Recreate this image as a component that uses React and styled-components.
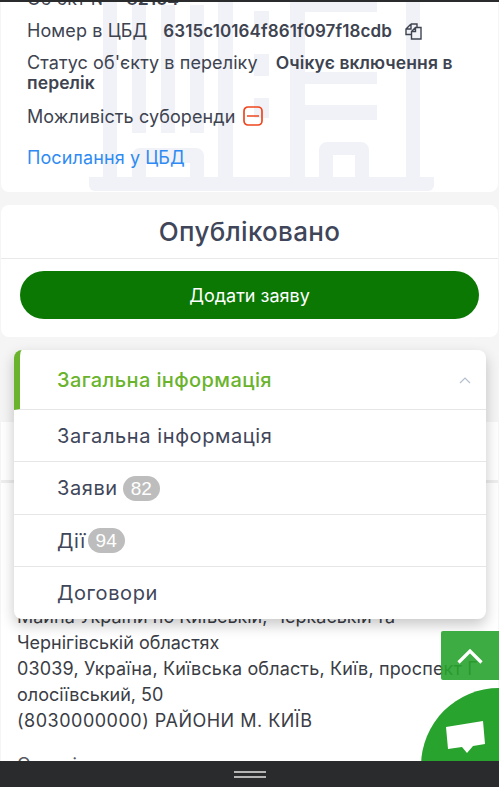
import React from 'react';
import styled, { createGlobalStyle } from 'styled-components';

const GlobalStyle = createGlobalStyle`
  * {
    box-sizing: border-box;
  }
  html, body {
    height: 100%;
    margin: 0;
    overflow: hidden;
  }
  body {
    background: #f5f5f5;
    color: #3e4350;
    font-family: Inter, "Noto Sans", sans-serif;
  }
`;

const Viewport = styled.div`
  height: 787px;
  overflow: hidden;
  position: relative;
  width: 499px;
`;

const TopEdge = styled.div`
  background: #2a2b2d;
  height: 2px;
  left: 0;
  position: absolute;
  right: 0;
  top: 0;
  z-index: 5;
`;

const Scroller = styled.div`
  display: flex;
  flex-direction: column;
  gap: 13px;
  margin-top: -13px;
  padding: 0 1px;
`;

const Card = styled.section`
  background: #fff;
  border-radius: 8px;
  overflow: hidden;
  position: relative;
`;

const Watermark = styled.svg`
  bottom: 0;
  left: 88px;
  position: absolute;
`;

const InfoList = styled.div`
  display: flex;
  flex-direction: column;
  font-size: 18px;
  letter-spacing: 0.1px;
  padding: 2px 20px 24px 26px;
  position: relative;
`;

const InfoRow = styled.div`
  line-height: 20px;
  margin-bottom: ${props => props.gap || 12}px;
`;

const Value = styled.b`
  font-size: ${props => props.size || 17.5}px;
  font-weight: 600;
  margin-left: ${props => props.offset || 18}px;
`;

const IconSlot = styled.span`
  display: inline-block;
  line-height: 0;
  margin-left: ${props => props.offset}px;
  vertical-align: -3px;
`;

const LinkText = styled.a`
  color: #2f8bf3;
  line-height: 20px;
`;

const StatusTitle = styled.h2`
  border-bottom: 1px solid #e9e9e9;
  color: #40465a;
  font-size: 26px;
  font-weight: 500;
  letter-spacing: 0.3px;
  line-height: 53px;
  margin: 0;
  text-align: center;
`;

const ButtonWrap = styled.div`
  padding: 12px 19px 18px;
`;

const AddButton = styled.button`
  background: #0b7803;
  border: 0;
  border-radius: 24px;
  color: #fff;
  display: block;
  font-family: inherit;
  font-size: 18px;
  height: 48px;
  width: 100%;
`;

const Lower = styled.div`
  background: #fff;
  margin-top: 72px;
  padding: 58px 16px 40px;
`;

const Divider = styled.div`
  background: #eee;
  height: 3px;
  margin: 0 -16px 121px;
`;

const AddressLine = styled.div`
  color: #3a3d45;
  font-size: 18px;
  letter-spacing: ${props => props.spacing || 0}px;
  line-height: 26px;
  white-space: nowrap;
`;

const Caption = styled.div`
  color: #555861;
  font-size: 18px;
  letter-spacing: 0.4px;
  line-height: 26px;
  margin-top: 18px;
`;

const Menu = styled.nav`
  background: #fff;
  border-radius: 8px;
  box-shadow: 0 6px 14px rgba(0, 0, 0, 0.22);
  left: 14px;
  position: absolute;
  top: 350px;
  width: 472px;
  z-index: 2;
`;

const MenuHead = styled.div`
  align-items: center;
  border-bottom: 1px solid #e6e6e6;
  border-left: 6px solid #6ab42d;
  border-radius: 8px 8px 0 0;
  color: #6ab42d;
  display: flex;
  font-size: 20px;
  font-weight: 500;
  height: 60px;
  justify-content: space-between;
  letter-spacing: 0.4px;
  padding: 0 15px 0 37px;
`;

const MenuItem = styled.div`
  align-items: center;
  border-top: ${props => (props.first ? 0 : '1px solid #e6e6e6')};
  color: #40465a;
  display: flex;
  font-size: 20px;
  gap: ${props => props.gap || 5}px;
  height: ${props => props.h}px;
  letter-spacing: 0.6px;
  padding-left: 43px;
`;

const Count = styled.span`
  background: #bdbdbd;
  border-radius: 13px;
  color: #fff;
  font-family: "Liberation Sans", sans-serif;
  font-size: 19px;
  letter-spacing: 0;
  line-height: 25px;
  text-align: center;
  width: 37px;
`;

const ScrollTop = styled.button`
  align-items: center;
  background: rgba(40, 163, 45, 0.9);
  border: 0;
  border-radius: 2px 0 0 2px;
  display: flex;
  height: 49px;
  justify-content: center;
  padding: 0;
  position: absolute;
  right: 0;
  top: 631px;
  width: 58px;
  z-index: 3;
`;

const ChatBubble = styled.div`
  background: #28a32d;
  border-radius: 50%;
  height: 156px;
  left: 421px;
  position: absolute;
  top: 688px;
  width: 156px;
  z-index: 3;
`;

const ChatIcon = styled.svg`
  left: 24px;
  position: absolute;
  top: 32px;
`;

const NavBar = styled.div`
  align-items: center;
  background: #2a2b2d;
  bottom: 0;
  display: flex;
  height: 26px;
  justify-content: center;
  left: 0;
  position: absolute;
  right: 0;
  z-index: 4;
`;

const Handle = styled.div`
  border-bottom: 2px solid #b5b5b5;
  border-top: 2px solid #b5b5b5;
  height: 7px;
  width: 32px;
`;

// viewBox is in page pixels, so the shapes read as measured on the screenshot
const BuildingMark = () => (
  <Watermark width="346" height="200" viewBox="89 -8 346 200" fill="#f1f2f7">
    <path d="M89 177h345v8a6 6 0 0 1-6 6H95a6 6 0 0 1-6-6z" />
    <rect x="103" y="2" width="14" height="175" />
    <rect x="132" y="5" width="14" height="128" />
    <rect x="161" y="5" width="14" height="128" />
    <rect x="190" y="5" width="14" height="128" />
    <rect x="218" y="2" width="15" height="175" />
    <path d="M132 177v-21a8 8 0 0 1 8-8h56a8 8 0 0 1 8 8v21h-14v-14h-44v14z" />
    <rect x="254" y="11" width="15" height="19" />
    <rect x="254" y="54" width="15" height="22" />
    <rect x="254" y="98" width="15" height="20" />
    <rect x="290" y="2" width="15" height="175" />
    <rect x="305" y="2" width="72" height="10" />
    <rect x="305" y="72" width="72" height="12" />
    <rect x="305" y="105" width="72" height="15" />
    <path d="M319 177v-27a8 8 0 0 1 8-8h34a8 8 0 0 1 8 8v27h-14v-22h-22v22z" />
    <rect x="406" y="2" width="14" height="175" />
  </Watermark>
);

const CopyIcon = () => (
  <svg width="17" height="17" viewBox="0 0 17 17" fill="none" stroke="#3e4350" strokeWidth="1.4">
    <path d="M6 1h6v3.5M6 1L1 6v5.500h5M6 1v5H1" />
    <path d="M10.500 4.500H16V16H6.500V8.500zM10.500 4.500v4H6.500" />
  </svg>
);

const MinusIcon = () => (
  <svg width="20" height="20" viewBox="0 0 20 20" fill="none" stroke="#f0451e" strokeWidth="1.7">
    <rect x="1" y="1" width="18" height="18" rx="4" />
    <path d="M4 10h12" />
  </svg>
);

const App = () => (
  <Viewport>
    <GlobalStyle />
    <TopEdge />
    <Scroller>
      <Card>
        <BuildingMark />
        <InfoList>
          <InfoRow>
            Об&apos;єкт №<Value offset={16}>82154</Value>
          </InfoRow>
          <InfoRow>
            Номер в ЦБД<Value size={17} offset={16}>6315c10164f861f097f18cdb</Value>
            <IconSlot offset={13}><CopyIcon /></IconSlot>
          </InfoRow>
          <InfoRow gap={13}>
            Статус об&apos;єкту в переліку<Value>Очікує включення в перелік</Value>
          </InfoRow>
          <InfoRow gap={21}>
            Можливість суборенди
            <IconSlot offset={8}><MinusIcon /></IconSlot>
          </InfoRow>
          <LinkText>Посилання у ЦБД</LinkText>
        </InfoList>
      </Card>
      <Card>
        <StatusTitle>Опубліковано</StatusTitle>
        <ButtonWrap>
          <AddButton>Додати заяву</AddButton>
        </ButtonWrap>
      </Card>
      <Lower>
        <Divider />
        <AddressLine>Майна України по Київській, Черкаській та</AddressLine>
        <AddressLine>Чернігівській областях</AddressLine>
        <AddressLine spacing={0.15}>03039, Україна, Київська область, Київ, проспект Г</AddressLine>
        <AddressLine>олосіївський, 50</AddressLine>
        <AddressLine spacing={0.5}>(8030000000) РАЙОНИ М. КИЇВ</AddressLine>
        <Caption>Організатор:</Caption>
      </Lower>
    </Scroller>
    <Menu>
      <MenuHead>
        Загальна інформація
        <svg width="12" height="8" viewBox="0 0 12 8" fill="none" stroke="#b4c0d0" strokeWidth="1.2">
          <path d="M1 7l5-5 5 5" />
        </svg>
      </MenuHead>
      <MenuItem first h={51}>Загальна інформація</MenuItem>
      <MenuItem h={53}>Заяви <Count>82</Count></MenuItem>
      <MenuItem h={52} gap={2}>Дії <Count>94</Count></MenuItem>
      <MenuItem h={53}>Договори</MenuItem>
    </Menu>
    <ScrollTop aria-label="Вгору">
      <svg width="26" height="16" viewBox="0 0 26 16" fill="none" stroke="#fff" strokeWidth="3.2">
        <path d="M1.500 14.500L13 3l11.500 11.500" />
      </svg>
    </ScrollTop>
    <ChatBubble>
      <ChatIcon width="40" height="34" viewBox="0 0 40 34" fill="#fff">
        <path d="M1 7l37-6 2 23-12 2-6 7-5-6-14 2z" />
      </ChatIcon>
    </ChatBubble>
    <NavBar>
      <Handle />
    </NavBar>
  </Viewport>
);

export default App;
